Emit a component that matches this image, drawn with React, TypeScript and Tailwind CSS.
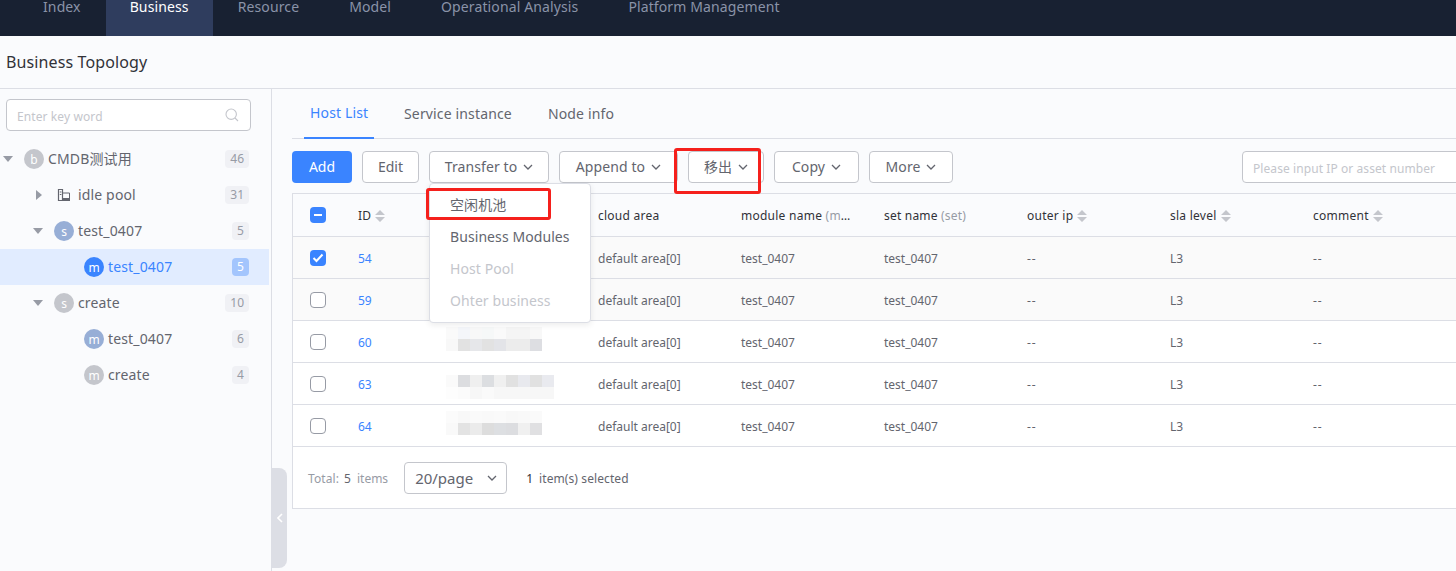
import React from 'react';

const navItems = ['Index', 'Business', 'Resource', 'Model', 'Operational Analysis', 'Platform Management'];

interface TreeNode {
  label: string;
  count: number;
  indent: string;
  caret?: 'down' | 'right';
  icon: string;
  iconColor?: string;
  selected?: boolean;
}

const treeNodes: TreeNode[] = [
  { label: 'CMDB测试用', count: 46, indent: 'pl-0', caret: 'down', icon: 'b', iconColor: 'bg-[#c4c6cc]' },
  { label: 'idle pool', count: 31, indent: 'pl-[30px]', caret: 'right', icon: 'folder' },
  { label: 'test_0407', count: 5, indent: 'pl-[30px]', caret: 'down', icon: 's', iconColor: 'bg-[#97aed6]' },
  { label: 'test_0407', count: 5, indent: 'pl-[60px]', icon: 'm', iconColor: 'bg-[#3a84ff]', selected: true },
  { label: 'create', count: 10, indent: 'pl-[30px]', caret: 'down', icon: 's', iconColor: 'bg-[#c4c6cc]' },
  { label: 'test_0407', count: 6, indent: 'pl-[60px]', icon: 'm', iconColor: 'bg-[#97aed6]' },
  { label: 'create', count: 4, indent: 'pl-[60px]', icon: 'm', iconColor: 'bg-[#c4c6cc]' },
];

// the blurred ip column, one array per 12px mosaic line
const mosaics: Record<number, string[][]> = {
  60: [
    ['#fafafa', '#f4f6fa', '#f8f8f8', '#f6f8f8', '#fafafa', '#f5f5f5', '#f5f5f5', '#f8f8f8'],
    ['#f8f8f8', '#e2e2e2', '#e6e7ea', '#e2e2e2', '#e3e4e8', '#ececec', '#ececec', '#dddee2'],
  ],
  63: [
    ['#fafafa', '#dcdde0', '#efefef', '#dcdee1', '#f0f0f0', '#e1e1e1', '#e8e9ee', '#e1e1e1', '#e9eaef'],
    ['#fdfdfd', '#fbfbfb', '#f7f7f7', '#fafafa', '#f7f7f7', '#f7f7f7', '#f7f7f7', '#f7f7f7', '#f7f7f7'],
  ],
  64: [
    ['#fbfbfb', '#f8f8f8', '#fafafa', '#f9f9f9', '#fafafa', '#f8f8f8', '#f9f9f9', '#fafafa'],
    ['#f9f9f9', '#e3e3e3', '#ebebeb', '#dddddd', '#dddfe2', '#dcdde0', '#f0f0f0', '#e0e0e2'],
  ],
};

const rows = [
  { id: 54, bg: 'bg-[#fafafa]', checked: true, mosaicPad: '' },
  { id: 59, bg: 'bg-[#fafafa]', checked: false, mosaicPad: '' },
  { id: 60, bg: 'bg-white', checked: false, mosaicPad: 'pt-[6px]' },
  { id: 63, bg: 'bg-white', checked: false, mosaicPad: 'pt-[12px]' },
  { id: 64, bg: 'bg-white', checked: false, mosaicPad: 'pt-[6px]' },
];

const gridCols = 'grid grid-cols-[50px_89px_151px_143px_143px_143px_143px_143px_200px]';

const Chevron = ({ className = '' }: { className?: string }) => (
  <svg width="10" height="6" viewBox="0 0 10 6" fill="none" className={className}>
    <path d="M1 1l4 4 4-4" stroke="#63656e" strokeWidth="1.3" />
  </svg>
);

const SortIcon = () => (
  <svg width="10" height="12" viewBox="0 0 10 12" className="ml-1 shrink-0" fill="#c4c6cc">
    <path d="M5 0l5 5H0zM5 12L0 7h10z" />
  </svg>
);

const Caret = ({ dir }: { dir: 'down' | 'right' }) =>
  dir === 'down' ? (
    <svg width="10" height="6" viewBox="0 0 10 6" fill="#979ba5"><path d="M0 0h10L5 6z" /></svg>
  ) : (
    <svg width="6" height="10" viewBox="0 0 6 10" fill="#979ba5" className="ml-[3px]"><path d="M0 0l6 5-6 5z" /></svg>
  );

const FolderIcon = () => (
  <svg width="20" height="14" viewBox="0 0 20 14" fill="none">
    <path d="M4.5 1.5h4v11h-4z" stroke="#63656e" strokeWidth="1.2" />
    <path d="M5.8 4h1.6M5.8 6.5h1.6" stroke="#63656e" strokeWidth="1" />
    <path d="M8.5 5h7v7.5h-7z" stroke="#63656e" strokeWidth="1" />
    <path d="M9 10h7v3H9z" fill="#63656e" />
  </svg>
);

const Checkbox = ({ state }: { state: 'off' | 'on' | 'some' }) => {
  if (state === 'off') return <div className="w-4 h-4 rounded-sm border border-[#979ba5] bg-white" />;
  return (
    <div className="w-4 h-4 rounded-sm bg-[#3a84ff] flex items-center justify-center">
      {state === 'on' ? (
        <svg width="12" height="10" viewBox="0 0 12 10" fill="none"><path d="M1.5 5l3 3 6-6.5" stroke="#fff" strokeWidth="2" /></svg>
      ) : (
        <div className="w-2 h-0.5 bg-white" />
      )}
    </div>
  );
};

const ToolButton = ({ label, width }: { label: string; width: string }) => (
  <button className={`h-8 ${width} shrink-0 flex items-center justify-center gap-1.5 border border-[#c4c6cc] rounded-sm bg-white text-sm tracking-[0.1px] text-[#63656e]`}>
    {label}
    <Chevron />
  </button>
);

const HeaderCell = ({ label, sort = true }: { label: string; sort?: boolean }) => (
  <div className="px-[15px] pt-0.5 flex items-center text-xs tracking-[0.25px] text-[#313238]">
    {label}
    {sort && <SortIcon />}
  </div>
);

const BodyCell = ({ children }: { children: React.ReactNode }) => (
  <div className="px-[15px] pt-0.5 flex items-center text-xs text-[#63656e]">{children}</div>
);

export default function App() {
  return (
    <div className="h-screen overflow-hidden flex flex-col bg-[#fafbfd] font-['Noto_Sans','Noto_Sans_CJK_SC',sans-serif]">
      <header className="h-9 shrink-0 bg-[#182132] flex pl-[18px]">
        {navItems.map(item => (
          <div
            key={item}
            className={`text-sm leading-[14px] tracking-[0.12px] whitespace-nowrap ${item === 'Business' ? 'w-[107px] text-center bg-[#2f3d5e] text-white' : 'px-[25px] text-[#8a93a8]'}`}
          >
            {item}
          </div>
        ))}
      </header>

      <div className="h-[53px] shrink-0 border-b border-[#dcdee5] flex items-center pl-1.5 text-base tracking-[0.12px] text-[#313238]">
        Business Topology
      </div>

      <div className="flex-1 flex min-h-0">
        <aside className="w-[272px] shrink-0 border-r border-[#dcdee5] pt-2.5">
          <div className="ml-1.5 w-[245px] h-8 border border-[#c4c6cc] rounded-sm bg-white flex items-center pl-2.5 pr-[11px]">
            <input placeholder="Enter key word" className="flex-1 min-w-0 pt-1 text-xs tracking-[0.1px] outline-none placeholder:text-[#c4c6cc]" />
            <svg width="14" height="14" viewBox="0 0 14 14" fill="none">
              <circle cx="6.2" cy="6.2" r="5.2" stroke="#c4c6cc" strokeWidth="1.1" />
              <path d="M10 10l3 3" stroke="#c4c6cc" strokeWidth="1.1" />
            </svg>
          </div>
          <div className="mt-2.5">
            {treeNodes.map((node, i) => (
              <div
                key={i}
                className={`w-[269px] h-9 flex items-center pr-5 ${node.indent} ${node.selected ? 'bg-[#e1ecff] text-[#3a84ff]' : 'text-[#63656e]'}`}
              >
                <div className="w-6 shrink-0 flex items-center pl-[3px]">{node.caret && <Caret dir={node.caret} />}</div>
                {node.icon === 'folder' ? (
                  <div className="w-5 h-5 shrink-0 flex items-center justify-center"><FolderIcon /></div>
                ) : (
                  <div className={`w-5 h-5 shrink-0 rounded-full ${node.iconColor} text-white text-xs leading-[22px] text-center`}>{node.icon}</div>
                )}
                <span className="ml-1 text-sm tracking-[0.15px] flex-1">{node.label}</span>
                <span className={`h-[18px] min-w-[17px] px-[5px] rounded-sm text-xs leading-[18px] text-center ${node.selected ? 'bg-[#a3c5fd] text-white' : 'bg-[#f0f1f5] text-[#979ba5]'}`}>
                  {node.count}
                </span>
              </div>
            ))}
          </div>
        </aside>

        <main className="relative flex-1 min-w-0 overflow-hidden pl-5">
          <div className="h-[50px] border-b border-[#dcdee5] flex gap-6 pl-3">
            {['Host List', 'Service instance', 'Node info'].map((tab, i) => (
              <div
                key={tab}
                className={`h-[50px] px-1.5 flex items-center text-sm tracking-[0.15px] whitespace-nowrap ${i === 0 ? 'border-b-2 border-[#3a84ff] text-[#3a84ff] w-[70px]' : 'text-[#63656e]'}`}
              >
                {tab}
              </div>
            ))}
          </div>

          <div className="flex gap-2.5 pt-3">
            <button className="h-8 w-[60px] shrink-0 bg-[#3a84ff] rounded-sm text-sm text-white">Add</button>
            <button className="h-8 w-[57px] shrink-0 border border-[#c4c6cc] rounded-sm bg-white text-sm text-[#63656e]">Edit</button>
            <div className="relative shrink-0">
              <ToolButton label="Transfer to" width="w-[120px]" />
              <div className="absolute z-10 left-0 top-8 w-[162px] h-[140px] py-[5px] bg-white border border-[#dcdee5] rounded-sm shadow-[0_2px_6px_rgba(0,0,0,0.08)] text-sm tracking-[0.08px]">
                <div className="h-8 pl-5 flex items-center text-[#63656e]">空闲机池</div>
                <div className="h-8 pl-5 flex items-center text-[#63656e]">Business Modules</div>
                <div className="h-8 pl-5 flex items-center text-[#c4c6cc]">Host Pool</div>
                <div className="h-8 pl-5 flex items-center text-[#c4c6cc]">Ohter business</div>
                <div className="absolute -left-1 top-1 w-[125px] h-8 border-[3px] border-[#f5201c] rounded-[3px]" />
              </div>
            </div>
            <ToolButton label="Append to" width="w-[119px]" />
            <div className="relative shrink-0">
              <ToolButton label="移出" width="w-[76px]" />
              <div className="absolute -left-3.5 -top-[3px] w-[87px] h-[46px] border-[3px] border-[#f5201c] rounded-[3px]" />
            </div>
            <ToolButton label="Copy" width="w-[85px]" />
            <ToolButton label="More" width="w-[84px]" />
            <input
              placeholder="Please input IP or asset number"
              className="ml-[279px] h-8 w-[300px] shrink-0 border border-[#c4c6cc] rounded-sm bg-white pl-2.5 pt-0.5 text-xs tracking-[0.08px] outline-none placeholder:text-[#c4c6cc]"
            />
          </div>

          <div className="mt-2.5 w-[1300px] border-t border-l border-b border-[#dcdee5] bg-white">
            <div className={`${gridCols} h-[43px] border-b border-[#dcdee5] bg-[#fafbfd]`}>
              <div className="pl-[17px] flex items-center"><Checkbox state="some" /></div>
              <HeaderCell label="ID" />
              <div />
              <HeaderCell label="cloud area" sort={false} />
              <div className="px-[15px] pt-0.5 flex items-center text-xs tracking-[0.25px] text-[#313238] min-w-0">
                <span className="truncate">module name <span className="text-[#979ba5]">(module)</span></span>
              </div>
              <div className="px-[15px] pt-0.5 flex items-center text-xs tracking-[0.2px] text-[#313238]">
                set name&nbsp;<span className="text-[#979ba5]">(set)</span>
              </div>
              <HeaderCell label="outer ip" />
              <HeaderCell label="sla level" />
              <HeaderCell label="comment" />
            </div>
            {rows.map(row => (
              <div key={row.id} className={`${gridCols} h-[42px] border-b border-[#dcdee5] ${row.bg}`}>
                <div className="pl-[17px] flex items-center"><Checkbox state={row.checked ? 'on' : 'off'} /></div>
                <BodyCell><span className="text-[#3a84ff]">{row.id}</span></BodyCell>
                <div className={`pl-[14px] ${row.mosaicPad}`}>
                  {(mosaics[row.id] || []).map((line, i) => (
                    <div key={i} className="flex">
                      {line.map((color, j) => (
                        <div key={j} className="w-3 h-3" style={{ backgroundColor: color }} />
                      ))}
                    </div>
                  ))}
                </div>
                <BodyCell>default area[0]</BodyCell>
                <BodyCell>test_0407</BodyCell>
                <BodyCell>test_0407</BodyCell>
                <BodyCell><span className="tracking-[1px]">--</span></BodyCell>
                <BodyCell>L3</BodyCell>
                <BodyCell><span className="tracking-[1px]">--</span></BodyCell>
              </div>
            ))}
            <div className="h-[61px] flex items-center pl-[15px] text-xs text-[#979ba5]">
              <span className="pt-0.5 tracking-[0.1px]">Total:</span>
              <span className="ml-[5px] pt-0.5 text-[#63656e]">5</span>
              <span className="ml-1.5 pt-0.5">items</span>
              <div className="ml-[16px] w-[103px] h-8 border border-[#c4c6cc] rounded-sm flex items-center justify-between pl-2.5 pr-[9px] text-[15px] text-[#63656e]">
                20/page
                <Chevron />
              </div>
              <span className="ml-[19px] pt-0.5 text-[#313238]">1</span>
              <span className="ml-1.5 pt-0.5 tracking-[0.1px] text-[#63656e]">item(s) selected</span>
            </div>
          </div>

          <div className="absolute left-0 top-[379px] w-[15px] h-[100px] bg-[#dcdee5] rounded-r-lg flex items-center justify-center">
            <svg width="6" height="10" viewBox="0 0 6 10" fill="none"><path d="M5 1L1 5l4 4" stroke="#fff" strokeWidth="1.6" /></svg>
          </div>
        </main>
      </div>
    </div>
  );
}
